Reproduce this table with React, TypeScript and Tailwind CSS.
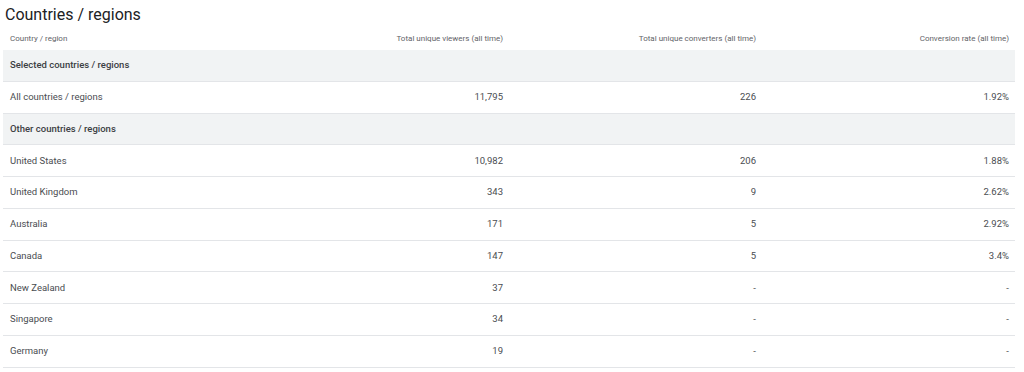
import React from "react";

const rows: { name: string; v: string; c: string; r: string; group?: boolean }[] = [
  { name: "Selected countries / regions", v: "", c: "", r: "", group: true },
  { name: "All countries / regions", v: "11,795", c: "226", r: "1.92%" },
  { name: "Other countries / regions", v: "", c: "", r: "", group: true },
  { name: "United States", v: "10,982", c: "206", r: "1.88%" },
  { name: "United Kingdom", v: "343", c: "9", r: "2.62%" },
  { name: "Australia", v: "171", c: "5", r: "2.92%" },
  { name: "Canada", v: "147", c: "5", r: "3.4%" },
  { name: "New Zealand", v: "37", c: "-", r: "-" },
  { name: "Singapore", v: "34", c: "-", r: "-" },
  { name: "Germany", v: "19", c: "-", r: "-" },
];

export default function App() {
  return (
    <div className="w-[1024px] h-[372px] bg-white overflow-hidden" style={{ fontFamily: "Roboto, 'Liberation Sans', sans-serif" }}>
      <h1 className="text-[16px] leading-none text-[#202124] pl-[5px] pt-[7px] h-[28px]">Countries / regions</h1>
      <div className="ml-[3px] w-[1012px]">
        <div className="grid grid-cols-4 h-[22px] items-center text-[8px] text-[#5f6368]">
          <div className="px-[7px]">Country / region</div>
          <div className="px-[6px] text-right">Total unique viewers (all time)</div>
          <div className="px-[6px] text-right">Total unique converters (all time)</div>
          <div className="px-[6px] text-right">Conversion rate (all time)</div>
        </div>
        {rows.map((row) =>
          row.group ? (
            <div key={row.name} className="h-[31.75px] flex items-center bg-[#f1f3f4] border-b border-[#e3e5e8] px-[7px] text-[9.5px] font-medium text-[#3c4043]">
              {row.name}
            </div>
          ) : (
            <div key={row.name} className="grid grid-cols-4 h-[31.75px] items-center border-b border-[#e3e5e8] text-[9.5px] text-[#4a4d51]">
              <div className="px-[7px]">{row.name}</div>
              <div className="px-[6px] text-right">{row.v}</div>
              <div className="px-[6px] text-right">{row.c}</div>
              <div className="px-[6px] text-right">{row.r}</div>
            </div>
          )
        )}
      </div>
    </div>
  );
}
